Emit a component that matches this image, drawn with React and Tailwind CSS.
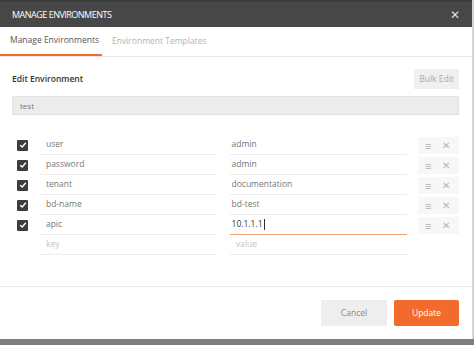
import { useState } from "react";

const rows = [
  { key: "user", value: "admin" },
  { key: "password", value: "admin" },
  { key: "tenant", value: "documentation" },
  { key: "bd-name", value: "bd-test" },
  { key: "apic", value: "10.1.1.1", active: true },
];

function Check() {
  return (
    <div className="w-[11px] h-[11px] rounded-[1px] bg-[#3d3d3d] flex items-center justify-center">
      <svg width="8" height="8" viewBox="0 0 8 8">
        <path d="M1.2 4.2 L3.2 6 L6.8 1.8" fill="none" stroke="#fff" strokeWidth="1.4" />
      </svg>
    </div>
  );
}

function Row({ item }) {
  return (
    <div className="flex items-center h-[20px]">
      <div className="w-[28px] pl-[5px]">
        <Check />
      </div>
      <div className="w-[176px] h-[20px] border-b border-[#ededed] flex items-center pl-[6px] text-[8.5px] text-[#777]">
        {item.key}
      </div>
      <div
        className={
          "ml-[14px] w-[178px] h-[20px] border-b flex items-center pl-[2px] text-[8.5px] " +
          (item.active ? "border-[#f0a070] text-[#333]" : "border-[#ededed] text-[#777]")
        }
      >
        {item.value}
        {item.active && <span className="ml-[1px] w-px h-[11px] bg-[#333]"></span>}
      </div>
      <div className="ml-[11px] w-[41px] h-[17px] bg-[#f7f7f7] flex items-center text-[#b4b4b4]">
        <span className="ml-[7px] text-[11px] leading-none">≡</span>
        <span className="ml-[10px] text-[10px] leading-none">✕</span>
      </div>
    </div>
  );
}

export default function App() {
  const [name] = useState("test");
  return (
    <div className="w-[474px] h-[345px] bg-[#7f7f7f] overflow-hidden font-['Open_Sans',sans-serif]">
      <div className="flex h-[339px]">
        <div className="w-[472px] h-full bg-white flex flex-col">
          <div className="h-[27px] bg-[#474747] border-t-2 border-[#3c3c3c] flex items-center justify-between px-[12px]">
            <span className="text-[9px] font-medium text-white tracking-[-0.5px]">MANAGE ENVIRONMENTS</span>
            <span className="text-[12px] text-[#ddd] leading-none">✕</span>
          </div>
          <div className="h-[30px] border-b border-[#e8e8e8] flex items-stretch">
            <div className="w-[102px] flex items-center pl-[10px] border-b-2 border-[#f26b2c] whitespace-nowrap text-[8.5px] text-[#555]">
              Manage Environments
            </div>
            <div className="flex items-center pl-[10px] whitespace-nowrap text-[8.5px] text-[#b4b4b4]">
              Environment Templates
            </div>
          </div>
          <div className="px-[12px] pr-[13px] flex-1 flex flex-col">
            <div className="mt-[12px] flex items-center justify-between">
              <span className="text-[8.5px] font-semibold text-[#333]">Edit Environment</span>
              <button className="w-[45px] h-[20px] bg-[#f0f0f0] text-[8.5px] text-[#aaa]">Bulk Edit</button>
            </div>
            <div className="mt-[7px] h-[19px] bg-[#ececec] border border-[#e2e2e2] flex items-center pl-[7px] text-[8px] text-[#777]">
              {name}
            </div>
            <div className="mt-[20px] flex flex-col">
              {rows.map((r) => (
                <Row key={r.key} item={r} />
              ))}
              <div className="flex items-center h-[20px]">
                <div className="w-[28px]"></div>
                <div className="w-[176px] h-[20px] border-b border-[#ededed] flex items-center pl-[6px] text-[8.5px] text-[#c4c4c4]">
                  key
                </div>
                <div className="ml-[14px] w-[178px] h-[20px] border-b border-[#ededed] flex items-center pl-[6px] text-[8.5px] text-[#c4c4c4]">
                  value
                </div>
              </div>
            </div>
          </div>
          <div className="h-[53px] border-t border-[#ececec] flex items-center justify-end pr-[13px] gap-[7px]">
            <button className="w-[66px] h-[26px] bg-[#eeeeee] text-[8.5px] text-[#888]">Cancel</button>
            <button className="w-[65px] h-[26px] bg-[#f26b2c] rounded-[2px] text-[8.5px] font-medium text-white">Update</button>
          </div>
        </div>
        <div className="w-[2px] h-full bg-[#d6d6d6]"></div>
      </div>
    </div>
  );
}
